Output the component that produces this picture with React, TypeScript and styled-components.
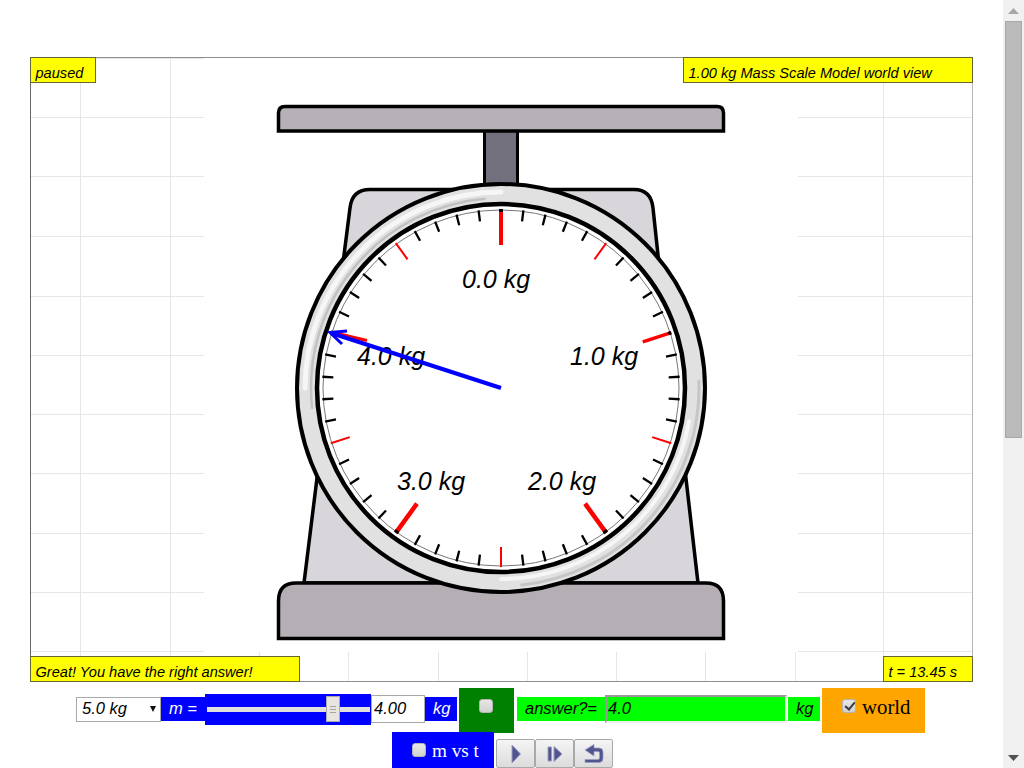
import styled, { createGlobalStyle } from "styled-components";

const GlobalStyle = createGlobalStyle`
  html, body {
    margin: 0;
    height: 100%;
    overflow: hidden;
    background: #ffffff;
  }
`;

const CX = 501;
const CY = 388;

const polar = (r: number, deg: number) => {
  const a = (deg * Math.PI) / 180;
  return { x: CX + r * Math.sin(a), y: CY - r * Math.cos(a) };
};

const arc = (r: number, from: number, to: number) => {
  const a = polar(r, from);
  const b = polar(r, to);
  return `M${a.x} ${a.y} A${r} ${r} 0 0 1 ${b.x} ${b.y}`;
};

const gridX = [80.5, 170.5, 259.5, 348.5, 438.5, 527.5, 616.5, 705.5, 795.5, 883.5];
const gridY = [58.5, 117.5, 176.5, 236.5, 296.5, 355.5, 414.5, 473.5, 533.5, 592.5, 651.5];

const majorWidths = [4, 3.4, 4.5, 4.5, 3];
const majorInner = [143, 149, 143, 143, 143];

const kgLabels = [
  { text: "0.0 kg", x: 462, y: 288 },
  { text: "1.0 kg", x: 570, y: 365 },
  { text: "2.0 kg", x: 528, y: 490 },
  { text: "3.0 kg", x: 397, y: 490 },
  { text: "4.0 kg", x: 357, y: 365 },
];

function Ticks() {
  const ticks = [];
  for (let i = 0; i < 50; i++) {
    const deg = i * 7.2;
    let inner = 168;
    let color = "#000000";
    let width = 2.3;
    if (i % 10 === 0) {
      inner = majorInner[i / 10];
      color = "#ff0000";
      width = majorWidths[i / 10];
    } else if (i % 5 === 0) {
      inner = 159;
      color = "#ff0000";
      width = 2;
    }
    const b = polar(179, deg);
    // the 4.0 kg tick sits a little off radial in the picture
    if (i !== 40) {
      const a = polar(inner, deg);
      ticks.push(<line key={i} x1={a.x} y1={a.y} x2={b.x} y2={b.y} stroke={color} strokeWidth={width} />);
    }
    if (i % 10 === 0) {
      const c = polar(176, deg);
      ticks.push(<line key={`tip${i}`} x1={c.x} y1={c.y} x2={b.x} y2={b.y} stroke="#000000" strokeWidth={width} />);
    }
  }
  return (
    <g>
      {ticks}
      <line x1={331} y1={332} x2={367} y2={340.500} stroke="#ff0000" strokeWidth={3} />
    </g>
  );
}

function SceneDrawing() {
  return (
    <Scene viewBox="31 58 941 623">
      {gridX.map((x) => (
        <line key={x} x1={x} y1={58} x2={x} y2={682} stroke="#e6e6e6" />
      ))}
      {gridY.map((y) => (
        <line key={y} x1={31} y1={y} x2={972} y2={y} stroke="#e6e6e6" />
      ))}
      <rect x={204} y={58} width={594} height={594} fill="#ffffff" />

      <path
        d="M304 583 L318 470 L344 255 L350 208 Q352 189.500 370 189.500 L634 189.500 Q651 189.500 653 208 L658 255 L685 470 L698 583 Z"
        fill="#d8d6da"
        stroke="#000000"
        strokeWidth={3.5}
      />
      <rect x={484.500} y={130} width={33} height={56} fill="#72707c" stroke="#000000" strokeWidth={3} />
      <path
        d="M278.500 131 L278.500 113 Q278.500 106.500 285 106.500 L717 106.500 Q723.500 106.500 723.500 113 L723.500 131 Z"
        fill="#b7b0b6"
        stroke="#000000"
        strokeWidth={3.5}
      />
      <path
        d="M278.500 638.500 L278.500 601 Q278.500 583 296 583 L706 583 Q723.500 583 723.500 601 L723.500 638.500 Z"
        fill="#b5aeb4"
        stroke="#000000"
        strokeWidth={3.5}
      />

      <circle cx={CX} cy={CY} r={204} fill="#e1e1e1" stroke="#000000" strokeWidth={4} />
      <path d={arc(190, 264, 355)} fill="none" stroke="#c2c2c2" strokeWidth={2.5} strokeLinecap="round" />
      <path d={arc(196, 270, 360)} fill="none" stroke="#f6f6f6" strokeWidth={5} strokeLinecap="round" />
      <path d={arc(198, 88, 174)} fill="none" stroke="#c6c6c6" strokeWidth={3} strokeLinecap="round" />
      <path d={arc(191, 100, 180)} fill="none" stroke="#f6f6f6" strokeWidth={4} strokeLinecap="round" />
      <circle cx={CX} cy={CY} r={184} fill="#ffffff" stroke="#000000" strokeWidth={4.5} />
      <circle cx={CX} cy={CY} r={178} fill="none" stroke="#777777" strokeWidth={1} />
      <Ticks />

      {kgLabels.map((l) => (
        <DialText key={l.text} x={l.x} y={l.y}>
          {l.text}
        </DialText>
      ))}

      <line x1={501} y1={388} x2={331} y2={333} stroke="#0000ff" strokeWidth={4} />
      <path d="M347 331 L330 332.500 L342 344" fill="none" stroke="#0000ff" strokeWidth={3} />
    </Scene>
  );
}

export default function App() {
  return (
    <Page>
      <GlobalStyle />
      <Main>
        <Frame>
          <SceneDrawing />
          <Note $left={-1} $top={-1} $width={66}>
            paused
          </Note>
          <Note $right={-1} $top={-1} $width={290}>
            1.00 kg Mass Scale Model world view
          </Note>
          <Note $left={-1} $bottom={-1} $width={270}>
            Great! You have the right answer!
          </Note>
          <Note $right={-1} $bottom={-1} $width={90}>
            t = 13.45 s
          </Note>
        </Frame>

        <Controls>
          <SelectWrap>
            <MassSelect defaultValue="5.0 kg">
              <option>1.0 kg</option>
              <option>2.0 kg</option>
              <option>3.0 kg</option>
              <option>4.0 kg</option>
              <option>5.0 kg</option>
            </MassSelect>
          </SelectWrap>
          <Label $bg="#0000ff" $fg="#ffffff" $width={44} $pad={8}>
            m =
          </Label>
          <SliderBox>
            <Slider type="range" min={0} max={5} step={0.01} defaultValue={4} />
          </SliderBox>
          <NumberField defaultValue="4.00" readOnly />
          <Label $bg="#0000ff" $fg="#ffffff" $width={32} $pad={8}>
            kg
          </Label>
          <ToggleBox $bg="#008000" $width={55} $gap={2}>
            <Check type="checkbox" />
          </ToggleBox>
          <Label $bg="#00ff00" $fg="#000000" $width={88} $pad={8} $gap={3}>
            answer?=
          </Label>
          <AnswerField defaultValue="4.0" readOnly />
          <Label $bg="#00ff00" $fg="#000000" $width={32} $pad={8} $gap={1}>
            kg
          </Label>
          <ToggleBox $bg="#ffa500" $width={103} $gap={2}>
            <Check type="checkbox" defaultChecked />
            <ToggleText $color="#000000" $size={20.8}>
              world
            </ToggleText>
          </ToggleBox>
        </Controls>

        <ButtonRow>
          <GraphToggle>
            <Check type="checkbox" />
            <ToggleText $color="#ffffff" $size={19.2}>
              m vs t
            </ToggleText>
          </GraphToggle>
          <PlayerButton aria-label="play">
            <svg width="12" height="20" viewBox="0 0 12 20">
              <path d="M2 1 L10.500 10 L2 19 Z" fill="#50558f" stroke="#9a9cc4" strokeWidth={1} />
            </svg>
          </PlayerButton>
          <PlayerButton aria-label="step">
            <svg width="18" height="18" viewBox="0 0 18 18">
              <path d="M2 2 H5.500 V16 H2 Z" fill="#50558f" stroke="#9a9cc4" strokeWidth={1} />
              <path d="M8 1.500 L16 9 L8 16.500 Z" fill="#50558f" stroke="#9a9cc4" strokeWidth={1} />
            </svg>
          </PlayerButton>
          <PlayerButton aria-label="reset">
            <svg width="20" height="20" viewBox="0 0 20 20">
              <path
                d="M1 6 L10 0.500 V4 H15 Q19 4 19 8 V14.500 Q19 18.500 15 18.500 H1 V15.500 H14 Q15.500 15.500 15.500 14 V9 Q15.500 7.500 14 7.500 H10 V12 Z"
                fill="#50558f"
                stroke="#9a9cc4"
                strokeWidth={0.8}
              />
            </svg>
          </PlayerButton>
        </ButtonRow>
      </Main>

      <ScrollBar>
        <ScrollArrow>
          <svg width="11" height="6" viewBox="0 0 11 6">
            <path d="M5.500 0 L11 6 H0 Z" fill="#a6a6a6" />
          </svg>
        </ScrollArrow>
        <ScrollThumb />
        <ScrollArrow>
          <svg width="11" height="6" viewBox="0 0 11 6">
            <path d="M0 0 H11 L5.500 6 Z" fill="#505050" />
          </svg>
        </ScrollArrow>
      </ScrollBar>
    </Page>
  );
}

const Page = styled.div`
  display: flex;
  height: 768px;
  overflow: hidden;
  font-family: "Liberation Sans", Arial, sans-serif;
`;

const Main = styled.main`
  flex: 1;
  min-width: 0;
  padding: 57px 0 0 30px;
  overflow: hidden;
`;

const Frame = styled.div`
  position: relative;
  box-sizing: border-box;
  width: 943px;
  height: 625px;
  border: 1px solid #8f8f8f;
  border-left-color: #666666;
  border-right-color: #b5b5b5;
  background: #ffffff;
`;

const Scene = styled.svg`
  display: block;
  width: 941px;
  height: 623px;
`;

const DialText = styled.text`
  font-family: "Liberation Sans", Arial, sans-serif;
  font-style: italic;
  font-size: 25px;
  fill: #000000;
`;

const Note = styled.div<{ $left?: number; $right?: number; $top?: number; $bottom?: number; $width: number }>`
  position: absolute;
  left: ${(p) => (p.$left === undefined ? "auto" : `${p.$left}px`)};
  right: ${(p) => (p.$right === undefined ? "auto" : `${p.$right}px`)};
  top: ${(p) => (p.$top === undefined ? "auto" : `${p.$top}px`)};
  bottom: ${(p) => (p.$bottom === undefined ? "auto" : `${p.$bottom}px`)};
  box-sizing: border-box;
  width: ${(p) => p.$width}px;
  height: 26px;
  padding: 6px 0 0 4.5px;
  border: 1px solid #666633;
  background: #ffff00;
  color: #000000;
  font-size: 14.6px;
  font-style: italic;
  line-height: 18px;
  white-space: nowrap;
`;

const Controls = styled.div`
  display: flex;
  align-items: center;
  justify-content: center;
  width: 941px;
  height: 42px;
  margin-top: 6px;
`;

const SelectWrap = styled.div`
  position: relative;
  flex: none;
  width: 85px;
  height: 25px;

  &::after {
    content: "";
    position: absolute;
    right: 5px;
    top: 9px;
    border-left: 3.5px solid transparent;
    border-right: 3.5px solid transparent;
    border-top: 6px solid #111111;
  }
`;

const MassSelect = styled.select`
  appearance: none;
  box-sizing: border-box;
  display: block;
  width: 100%;
  height: 100%;
  padding: 0 0 2px 5px;
  border: 1px solid #aaaaaa;
  border-radius: 0;
  background: #ffffff;
  color: #000000;
  font: italic 16.5px "Liberation Sans", Arial, sans-serif;
`;

const Label = styled.div<{ $bg: string; $fg: string; $width: number; $pad: number; $gap?: number }>`
  flex: none;
  box-sizing: border-box;
  width: ${(p) => p.$width}px;
  height: 24px;
  margin-left: ${(p) => p.$gap ?? 0}px;
  padding-left: ${(p) => p.$pad}px;
  background: ${(p) => p.$bg};
  color: ${(p) => p.$fg};
  font-size: 16.5px;
  font-style: italic;
  line-height: 23px;
  white-space: nowrap;
`;

const SliderBox = styled.div`
  display: flex;
  align-items: center;
  flex: none;
  box-sizing: border-box;
  width: 166px;
  height: 31px;
  padding-left: 2px;
  background: #0000ff;
`;

const Slider = styled.input`
  appearance: none;
  display: block;
  width: 163px;
  height: 26px;
  margin: 0;
  background: transparent;

  &::-webkit-slider-runnable-track {
    height: 5px;
    background: #e2e0de;
  }

  &::-webkit-slider-thumb {
    appearance: none;
    box-sizing: border-box;
    width: 14px;
    height: 26px;
    margin-top: -10.5px;
    border: 1px solid #aaaaaa;
    background:
      linear-gradient(#a8a4a0, #a8a4a0) center 9px / 6px 1px no-repeat,
      linear-gradient(#a8a4a0, #a8a4a0) center 12px / 6px 1px no-repeat,
      linear-gradient(#a8a4a0, #a8a4a0) center 15px / 6px 1px no-repeat,
      #e8e4df;
  }
`;

const NumberField = styled.input`
  flex: none;
  box-sizing: border-box;
  width: 54px;
  height: 28px;
  padding: 0 0 2px 2px;
  border: 1px solid #aaaaaa;
  border-radius: 0;
  outline: none;
  background: #ffffff;
  color: #000000;
  font: italic 16.5px "Liberation Sans", Arial, sans-serif;
`;

const AnswerField = styled.input`
  flex: none;
  box-sizing: border-box;
  width: 182px;
  height: 28px;
  padding: 0 0 2px 1px;
  border: 2px solid;
  border-color: #999999 #eeeeee #eeeeee #999999;
  border-radius: 0;
  outline: none;
  background: #00ff00;
  color: #000000;
  font: italic 16.5px "Liberation Sans", Arial, sans-serif;
`;

const ToggleBox = styled.div<{ $bg: string; $width: number; $gap: number }>`
  display: flex;
  align-items: flex-start;
  align-self: flex-start;
  gap: 6px;
  flex: none;
  box-sizing: border-box;
  width: ${(p) => p.$width}px;
  height: 45px;
  margin-left: ${(p) => p.$gap}px;
  padding: 8px 0 0 20px;
  background: ${(p) => p.$bg};
`;

const ToggleText = styled.span<{ $color: string; $size: number }>`
  color: ${(p) => p.$color};
  font-family: "Liberation Serif", "Times New Roman", serif;
  font-size: ${(p) => p.$size}px;
  line-height: 22px;
`;

const Check = styled.input`
  appearance: none;
  position: relative;
  flex: none;
  box-sizing: border-box;
  width: 14px;
  height: 14px;
  margin: 3px 0 0;
  border: 1px solid #b4b4b4;
  border-radius: 3px;
  background: linear-gradient(#e6e6e6, #d2d2d2);

  &:checked::after {
    content: "";
    position: absolute;
    left: 4px;
    top: 0;
    width: 4px;
    height: 8px;
    border: solid #3c3c3c;
    border-width: 0 2.5px 2.5px 0;
    transform: rotate(40deg);
  }
`;

const ButtonRow = styled.div`
  display: flex;
  align-items: flex-start;
  height: 40px;
  margin: 2px 0 0 362px;
`;

const GraphToggle = styled.div`
  display: flex;
  align-items: flex-start;
  gap: 6px;
  flex: none;
  box-sizing: border-box;
  width: 102px;
  height: 40px;
  margin-right: 2px;
  padding: 8px 0 0 20px;
  background: #0000ff;
`;

const PlayerButton = styled.button`
  display: flex;
  align-items: center;
  justify-content: center;
  flex: none;
  box-sizing: border-box;
  width: 39px;
  height: 29px;
  margin-top: 7px;
  padding: 0;
  border: 1px solid #a9a9a9;
  border-radius: 2px;
  background: linear-gradient(#f4f4f4, #dcdcdc);
`;

const ScrollBar = styled.aside`
  display: flex;
  flex-direction: column;
  flex: none;
  width: 21px;
  height: 768px;
  background: #f0f0f0;
`;

const ScrollArrow = styled.div`
  display: flex;
  align-items: center;
  justify-content: center;
  flex: none;
  height: 21px;
`;

const ScrollThumb = styled.div`
  flex: none;
  box-sizing: border-box;
  width: 17px;
  height: 417px;
  margin: 0 2px auto;
  border: 1px solid #a8a8a8;
  background: #bababa;
`;
